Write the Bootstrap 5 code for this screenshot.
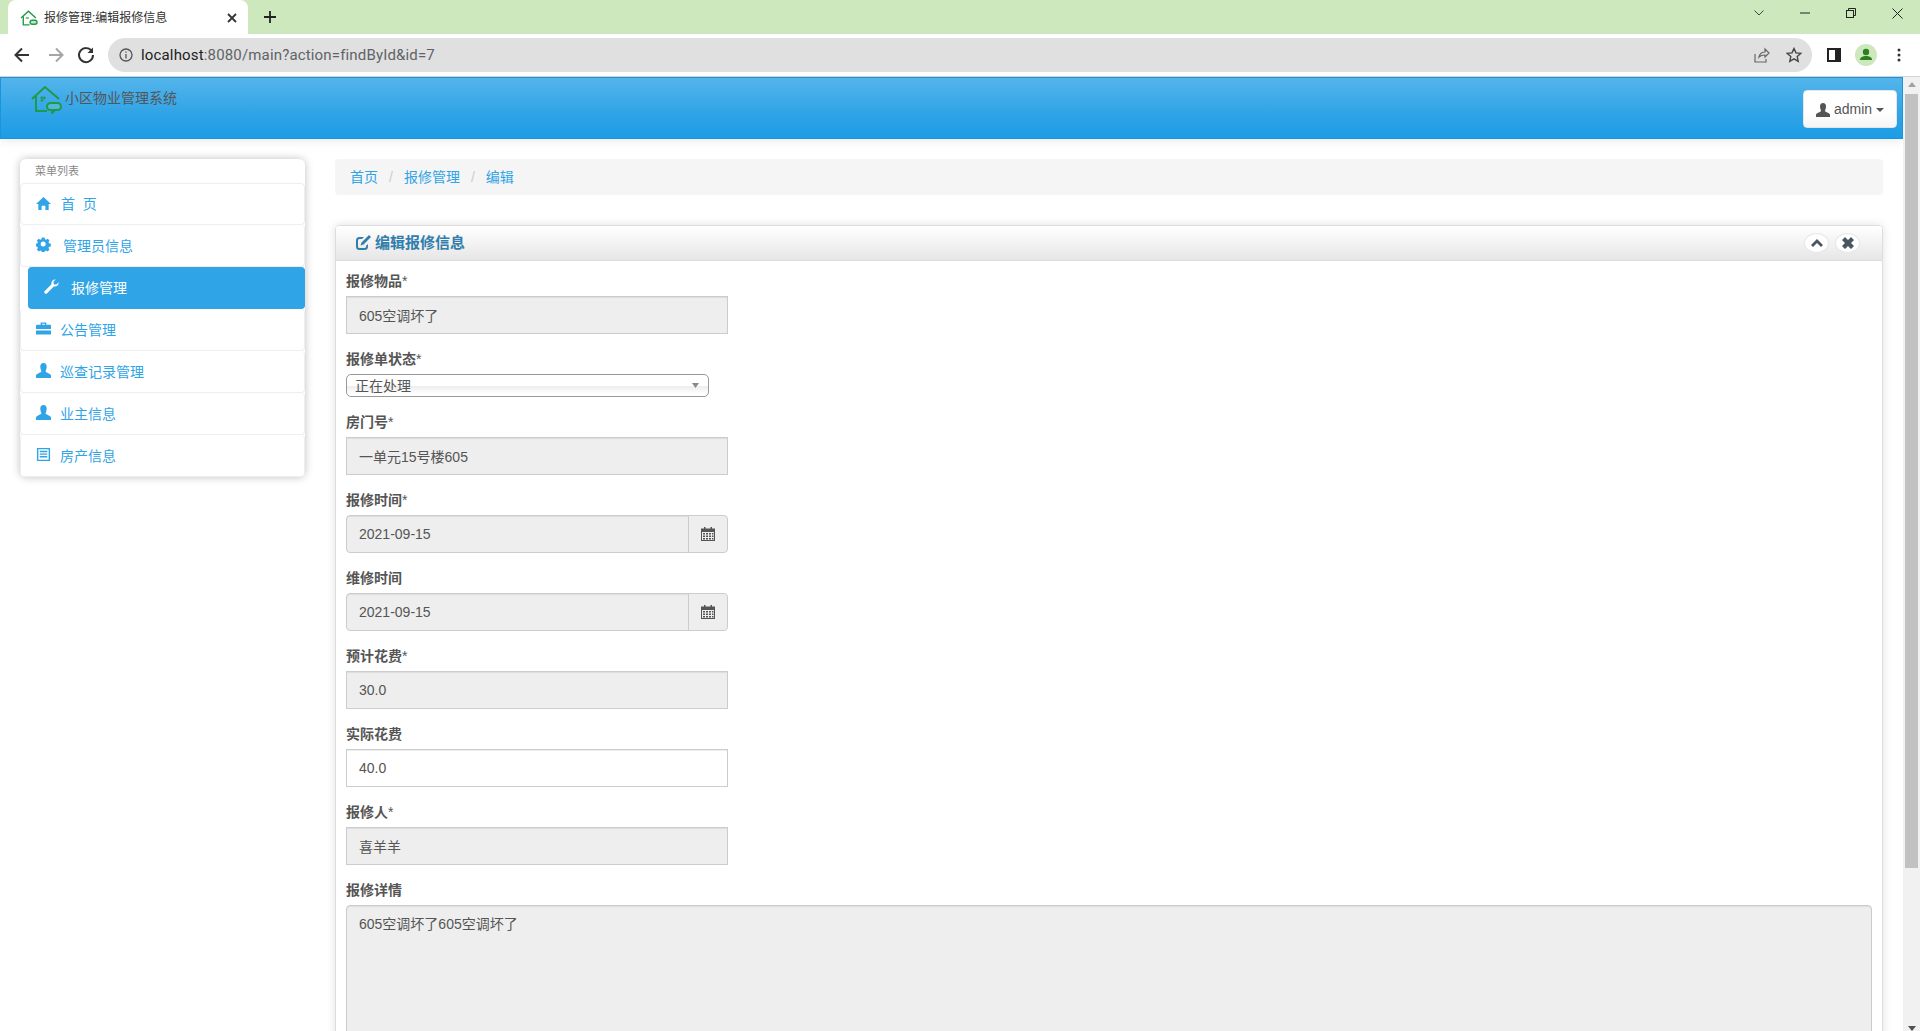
<!DOCTYPE html>
<html lang="zh">
<head>
<meta charset="utf-8">
<title>报修管理:编辑报修信息</title>
<link rel="stylesheet" href="https://cdn.jsdelivr.net/npm/bootstrap@5.3.0/dist/css/bootstrap.min.css">
<style>
html,body{height:100%;}
body{overflow:hidden;background:#fff;color:#555;font:14px/20px "Liberation Sans","Noto Sans CJK SC",sans-serif;display:flex;flex-direction:column;}
.tabstrip{height:34px;background:#cce8bc;flex:none;}
.chrome-tab{width:240px;height:34px;margin-left:8px;background:#fff;border-radius:8px 8px 0 0;padding:2px 11px 0 12px;font-size:12px;color:#333;}
.tab-title{margin-left:6px;flex:1;}
.win-ctl{width:46px;height:26px;margin-top:0;}
.toolbar{height:43px;flex:none;background:#fff;border-bottom:1px solid #d2d2d2;padding:0 19px 1px 12px;}
.tool-btn{width:20px;height:20px;flex:none;}
.tool-fwd{margin-left:6px;}
.tool-reload{margin-left:2px;}
.omnibox{height:34px;background:#e0e0e0;border-radius:17px;margin:0 1px 0 4px;padding:0 10px 0 11px;flex:1;font:15px/34px Roboto,"Liberation Sans",sans-serif;letter-spacing:.16px;color:#5f6368;}
.url-host{color:#202124;}
.page-area{flex:1;min-height:0;}
.page-main{flex:1;min-width:0;overflow:hidden;}
.scroll-track{width:17px;flex:none;background:#f1f1f1;position:relative;}
.scroll-thumb{position:absolute;left:2px;right:2px;top:17px;height:774px;background:#c1c1c1;}
.scroll-up{position:absolute;left:5px;top:5px;border:4px solid transparent;border-top:0;border-bottom:5px solid #a3a3a3;}
.scroll-down{position:absolute;left:5px;bottom:0;border:4px solid transparent;border-bottom:0;border-top:5px solid #505050;}
.app-nav{height:62px;padding:0;align-items:flex-start;background:linear-gradient(#54b4eb,#2fa4e7 60%,#1d9ce5);border:1px solid #1995dc;box-shadow:0 1px 10px rgba(0,0,0,.1);flex-wrap:nowrap;justify-content:space-between;}
.brand-box{margin:7px 0 0 30px;padding:0;color:#555;font-size:14px;line-height:20px;}
.brand-name{margin:3px 0 0 3px;}
.user-btn{margin:12px 5px 0 0;height:38px;width:94px;padding:0;font-size:14px;color:#555;background:linear-gradient(#fff,#fff 60%,#f5f5f5);border:1px solid #e6e6e6;border-radius:4px;}
.user-btn:hover{color:#555;background:#fff;}
.caret-mark{display:inline-block;margin-left:4px;border:4px solid transparent;border-top:4px solid #555;border-bottom:0;vertical-align:middle;}
.content-row{padding:20px 20px 0;gap:30px;}
.side-box{width:285px;flex:none;border-radius:6px;box-shadow:0 0 8px rgba(0,0,0,.25);height:318px;background:#fff;}
.side-head{height:24px;padding:2px 15px 0;font-size:11px;line-height:20px;color:#888;}
.side-list{--bs-list-group-border-color:#eee;}
.side-item{height:42px;margin:0;padding:0 0 0 15px;border:1px solid #eee;border-radius:4px!important;color:#2fa4e7;font-size:14px;background:#fff;}
.side-item svg{width:15px;height:15px;flex:none;fill:#2fa4e7;margin-right:9px;margin-top:-2px;}
.side-item.home-row svg{margin-right:10px;}
.side-item.wide-gap svg{margin-right:12px;}
.side-item.selected{margin-left:8px;background:#2fa4e7;border-color:#2fa4e7;color:#fff;padding-left:15px;}
.side-item.selected svg{fill:#fff;margin-right:12px;}
.main-col{flex:1;min-width:0;}
.crumbs{--bs-breadcrumb-divider:"/";--bs-breadcrumb-margin-bottom:30px;height:36px;background:#f5f5f5;border-radius:4px;padding:0 15px;align-items:center;font-size:14px;}
.crumbs .breadcrumb-item{padding-left:11px;}
.crumbs .breadcrumb-item:first-child{padding-left:0;}
.crumbs .breadcrumb-item::before{padding-right:11px;color:#ccc;}
.crumbs a{color:#2fa4e7;text-decoration:none;}
.edit-panel{border:1px solid #ddd;border-radius:4px 4px 0 0;box-shadow:0 0 10px rgba(0,0,0,.12);}
.panel-top{height:35px;padding:0 22px 0 19px;background:linear-gradient(#fff,#f5f5f5 40%,#e6e6e6);border-bottom:1px solid #ddd;border-radius:3px 3px 0 0;font-size:15px;font-weight:bold;color:#317eac;}
.panel-top svg.title-ico{width:16px;height:16px;fill:#317eac;margin-right:4px;}
.round-tool{width:25px;height:20px;margin-left:6px;padding:0;display:flex;align-items:center;justify-content:center;background:#fff;border:1px solid #e6e6e6;border-radius:50%;}
.round-tool svg{width:12px;height:12px;fill:#4a5661;}
.panel-form{padding:10px 10px 0;}
.field-wrap{margin-bottom:15px;}
.field-short{width:382px;}
.field-label{display:block;margin:0 0 5px;font-weight:bold;color:#555;line-height:20px;height:20px;font-size:14px;}
.star-mark{font-weight:normal;}
.plain-input{height:38px;padding:8px 12px;font-size:14px;line-height:20px;color:#555;border:1px solid #ccc;border-radius:0;box-shadow:inset 0 1px 1px rgba(0,0,0,.075);}
.plain-input:disabled,.plain-input[readonly]{background:#eee;opacity:1;color:#555;}
.date-group .plain-input{border-radius:4px 0 0 4px;}
.date-addon{width:40px;height:38px;justify-content:center;padding:0;background:#eee;border:1px solid #ccc;border-radius:0 4px 4px 0;}
.date-addon svg{width:14px;height:14px;fill:#555;}
.state-select{width:363px;height:23px;padding:0 0 0 8px;font-size:14px;line-height:20px;color:#555;border:1px solid #999;border-radius:5px;box-shadow:none;background:url("data:image/svg+xml,%3Csvg xmlns='http://www.w3.org/2000/svg' width='7' height='5'%3E%3Cpath d='M0 0h7L3.500 5z' fill='%23888'/%3E%3C/svg%3E") no-repeat right 9px center,linear-gradient(#fff 50%,#ececec 52%,#fff 90%);}
.detail-area{height:210px;width:100%;padding:8px 12px;font-size:14px;line-height:20px;color:#555;background:#eee;border:1px solid #ccc;border-radius:4px;box-shadow:inset 0 1px 1px rgba(0,0,0,.075);resize:none;}
.panel-ico{margin-left:6px;}
.avatar-ico{margin-left:6px;}
.menu-ico{margin-left:12px;}
</style>
</head>
<body>
<div class="tabstrip d-flex">
  <div class="chrome-tab d-flex align-items-center">
    <svg width="18" height="16" viewBox="0 0 30 28" fill="none" stroke="#1f9a46" stroke-width="2.4"><path d="M1 14 14 2l13 12"/><path d="M5 11v15h11"/><rect x="17" y="18" width="12" height="7" rx="3.5" fill="#bfe6c8"/><path d="M10 13h2v2h-2zM13 13h1v2h-1z" stroke-width="1"/></svg>
    <span class="tab-title">报修管理:编辑报修信息</span>
    <svg width="10" height="10" viewBox="0 0 10 10" stroke="#333" stroke-width="1.8"><path d="M1 1l8 8M9 1l-8 8"/></svg>
  </div>
  <div class="ms-3 d-flex align-items-center">
    <svg width="12" height="12" viewBox="0 0 12 12" stroke="#222" stroke-width="1.8"><path d="M6 0v12M0 6h12"/></svg>
  </div>
  <div class="ms-auto d-flex">
    <div class="win-ctl d-flex align-items-center justify-content-center"><svg width="10" height="6" viewBox="0 0 10 6" fill="none" stroke="#444"><path d="M.5.5 5 5 9.500.5"/></svg></div>
    <div class="win-ctl d-flex align-items-center justify-content-center"><svg width="10" height="2" viewBox="0 0 10 2" stroke="#222"><path d="M0 1h10"/></svg></div>
    <div class="win-ctl d-flex align-items-center justify-content-center"><svg width="10" height="10" viewBox="0 0 10 10" fill="none" stroke="#222"><rect x=".5" y="2.500" width="7" height="7"/><path d="M2.500 2.500V.5h7v7h-2"/></svg></div>
    <div class="win-ctl d-flex align-items-center justify-content-center"><svg width="11" height="11" viewBox="0 0 11 11" stroke="#222"><path d="M.5.5l10 10M10.500.5l-10 10"/></svg></div>
  </div>
</div>
<div class="toolbar d-flex align-items-center gap-2">
  <svg class="tool-btn" viewBox="0 0 20 20" fill="none" stroke="#333" stroke-width="2"><path d="M17 10H4M10 3.500 3.500 10 10 16.500"/></svg>
  <svg class="tool-btn tool-fwd" viewBox="0 0 20 20" fill="none" stroke="#a5a5a5" stroke-width="2"><path d="M3 10h13M10 3.500l6.500 6.500-6.500 6.500"/></svg>
  <svg class="tool-btn tool-reload" viewBox="0 0 20 20" fill="none" stroke="#333" stroke-width="2"><path d="M16 6.500A7 7 0 1 0 17 10"/><path d="M17 2.500V8h-5.500z" fill="#333" stroke="none"/></svg>
  <div class="omnibox d-flex align-items-center">
    <svg width="14" height="14" viewBox="0 0 14 14" fill="none" stroke="#555" stroke-width="1.300"><circle cx="7" cy="7" r="6"/><path d="M7 6v4.500M7 3.500v1.300"/></svg>
    <span class="ms-2"><span class="url-host">localhost</span>:8080/main?action=findById&amp;id=7</span>
    <svg class="ms-auto" width="16" height="16" viewBox="0 0 16 16" fill="none" stroke="#666" stroke-width="1.200"><path d="M1 7v8h11v-3M5 10c1-4 4-5 6-5V2l4 4-4 4V8c-2 0-4 0-6 2z"/></svg>
    <svg class="ms-3" width="16" height="16" viewBox="0 0 16 16" fill="none" stroke="#444" stroke-width="1.400"><path d="m8 1.500 2 4.400 4.800.5-3.600 3.200 1 4.700L8 11.900l-4.200 2.400 1-4.700L1.200 6.400 6 5.900z"/></svg>
  </div>
  <svg width="14" height="14" viewBox="0 0 14 14" class="panel-ico"><path fill="#222" d="M0 0h14v14H0z"/><path fill="#fff" d="M2 2h6v10H2z"/></svg>
  <svg width="22" height="22" viewBox="0 0 22 22" class="avatar-ico"><circle cx="11" cy="11" r="11" fill="#cce8bc"/><circle cx="11" cy="8" r="3.200" fill="#2f7d1f"/><path fill="#2f7d1f" d="M5 16c0-3 3-4 6-4s6 1 6 4z"/></svg>
  <svg width="4" height="14" viewBox="0 0 4 14" class="menu-ico" fill="#333"><circle cx="2" cy="2" r="1.500"/><circle cx="2" cy="7" r="1.500"/><circle cx="2" cy="12" r="1.500"/></svg>
</div>
<div class="page-area d-flex">
  <div class="page-main">
    <nav class="navbar app-nav">
      <div class="brand-box d-flex align-items-start">
        <svg width="31" height="29" viewBox="0 0 31 29" fill="none" stroke="#1f9a46" stroke-width="2"><path d="M1 14 14 2l14 12"/><path d="M5 11v15h11"/><rect x="16" y="18" width="14" height="7" rx="3.500" fill="#55b7d8"/><path d="M10 12h2v2h-2zM13 12h1v2h-1zM10 15h2v1h-2z" stroke-width="1"/><path d="M21 25v3l3-3"/></svg>
        <span class="brand-name">小区物业管理系统</span>
      </div>
      <button class="btn user-btn" type="button">
        <svg width="14" height="14" viewBox="0 0 14 14" fill="#555" class="me-1"><path d="M7 0c2 0 3 1.500 3 3.500S9 7 9 8c0 1 4 1.500 5 3.500V14H0v-2.500C1 9.500 5 9 5 8S4 5.500 4 3.500 5 0 7 0z"/></svg>admin<span class="caret-mark"></span>
      </button>
    </nav>
    <div class="content-row d-flex align-items-start">
      <aside class="side-box">
        <div class="side-head">菜单列表</div>
        <div class="list-group side-list">
          <a href="#" class="list-group-item side-item home-row d-flex align-items-center"><svg viewBox="0 0 16 16"><path d="M8 1 0 8.500h2.500V15H6v-4.500h4V15h3.500V8.500H16z"/></svg>首&nbsp;&nbsp;页</a>
          <a href="#" class="list-group-item side-item wide-gap d-flex align-items-center"><svg viewBox="0 0 16 16"><path fill-rule="evenodd" d="M6.500 1h3l.4 2 1.300.6 1.800-1.100 2 2-1.100 1.800.6 1.300 2 .4v3l-2 .4-.6 1.300 1.100 1.800-2 2-1.800-1.100-1.300.6-.4 1.500h-3l-.4-1.500-1.300-.6-1.800 1.100-2-2 1.100-1.800-.6-1.300-2-.4v-3l2-.4.600-1.300-1.100-1.800 2-2 1.800 1.100 1.300-.6zM8 5.500a2.800 2.800 0 1 0 0 5.600 2.800 2.800 0 0 0 0-5.600z" transform="translate(0 -.5) scale(.96)"/></svg>管理员信息</a>
          <a href="#" class="list-group-item side-item selected d-flex align-items-center"><svg viewBox="0 0 16 16"><path d="M15.500 3.500 13 6l-2.500-.5L10 3l2.500-2.500C10 0 7.500 2 8 5.500L.8 12.700a1.700 1.700 0 0 0 2.500 2.500L10.500 8c3.500.500 5.500-2 5-4.500z"/></svg>报修管理</a>
          <a href="#" class="list-group-item side-item d-flex align-items-center"><svg viewBox="0 0 16 16"><path d="M5 1.500h6V4h4a1 1 0 0 1 1 1v3.500H0V5a1 1 0 0 1 1-1h4zM6.500 3v1h3V3zM0 10h16v3.500a1 1 0 0 1-1 1H1a1 1 0 0 1-1-1z"/></svg>公告管理</a>
          <a href="#" class="list-group-item side-item d-flex align-items-center"><svg viewBox="0 0 14 14"><path d="M7 0c2 0 3 1.500 3 3.500S9 7 9 8c0 1 4 1.500 5 3.500V14H0v-2.500C1 9.500 5 9 5 8S4 5.500 4 3.500 5 0 7 0z"/></svg>巡查记录管理</a>
          <a href="#" class="list-group-item side-item d-flex align-items-center"><svg viewBox="0 0 14 14"><path d="M7 0c2 0 3 1.500 3 3.500S9 7 9 8c0 1 4 1.500 5 3.500V14H0v-2.500C1 9.500 5 9 5 8S4 5.500 4 3.500 5 0 7 0z"/></svg>业主信息</a>
          <a href="#" class="list-group-item side-item d-flex align-items-center"><svg viewBox="0 0 16 16"><path fill-rule="evenodd" d="M1 1h14v14H1zM2.500 2.500v11h11v-11zM4 4h8v1.500H4zM4 6.800h8v1.500H4zM4 9.600h8v1.500H4z"/></svg>房产信息</a>
        </div>
      </aside>
      <main class="main-col">
        <nav aria-label="breadcrumb">
          <ol class="breadcrumb crumbs">
            <li class="breadcrumb-item"><a href="#">首页</a></li>
            <li class="breadcrumb-item"><a href="#">报修管理</a></li>
            <li class="breadcrumb-item"><a href="#">编辑</a></li>
          </ol>
        </nav>
        <section class="edit-panel">
          <div class="panel-top d-flex align-items-center">
            <svg class="title-ico" viewBox="0 0 16 16"><path d="M13 9v2.500A3.500 3.500 0 0 1 9.500 15h-5A3.500 3.500 0 0 1 1 11.500v-6A3.500 3.500 0 0 1 4.500 2H9L7 4H4.500A1.500 1.500 0 0 0 3 5.500v6A1.500 1.500 0 0 0 4.500 13h5a1.500 1.500 0 0 0 1.500-1.500V11zM14 0l2 2-7.500 7.500L5.500 10.500 6.500 7.500z"/></svg>
            <span>编辑报修信息</span>
            <button class="round-tool ms-auto" type="button" aria-label="collapse"><svg viewBox="0 0 12 12"><path d="M6 2 12 8l-2 2-4-4-4 4-2-2z"/></svg></button>
            <button class="round-tool" type="button" aria-label="close"><svg viewBox="0 0 12 12"><path d="M3 0l3 3 3-3 3 3-3 3 3 3-3 3-3-3-3 3-3-3 3-3-3-3z"/></svg></button>
          </div>
          <form class="panel-form">
            <div class="field-wrap field-short"><label class="field-label">报修物品<span class="star-mark">*</span></label><input class="form-control plain-input" value="605空调坏了" readonly></div>
            <div class="field-wrap field-short"><label class="field-label">报修单状态<span class="star-mark">*</span></label><select class="form-select state-select"><option>正在处理</option></select></div>
            <div class="field-wrap field-short"><label class="field-label">房门号<span class="star-mark">*</span></label><input class="form-control plain-input" value="一单元15号楼605" readonly></div>
            <div class="field-wrap field-short"><label class="field-label">报修时间<span class="star-mark">*</span></label>
              <div class="input-group date-group"><input class="form-control plain-input" value="2021-09-15" readonly><span class="input-group-text date-addon"><svg viewBox="0 0 14 14"><path fill-rule="evenodd" d="M3 0h1.500v1.500h5V0H11v1.500h3V14H0V1.500h3zM1 5v8h12V5zM2 6h2v1.500H2zM5 6h2v1.500H5zM8 6h2v1.500H8zM11 6h1.500v1.500H11zM2 8.500h2V10H2zM5 8.500h2V10H5zM8 8.500h2V10H8zM11 8.500h1.500V10H11zM2 11h2v1.500H2zM5 11h2v1.500H5zM8 11h2v1.500H8zM11 11h1.500v1.500H11z"/></svg></span></div></div>
            <div class="field-wrap field-short"><label class="field-label">维修时间</label>
              <div class="input-group date-group"><input class="form-control plain-input" value="2021-09-15" readonly><span class="input-group-text date-addon"><svg viewBox="0 0 14 14"><path fill-rule="evenodd" d="M3 0h1.500v1.500h5V0H11v1.500h3V14H0V1.500h3zM1 5v8h12V5zM2 6h2v1.500H2zM5 6h2v1.500H5zM8 6h2v1.500H8zM11 6h1.500v1.500H11zM2 8.500h2V10H2zM5 8.500h2V10H5zM8 8.500h2V10H8zM11 8.500h1.500V10H11zM2 11h2v1.500H2zM5 11h2v1.500H5zM8 11h2v1.500H8zM11 11h1.500v1.500H11z"/></svg></span></div></div>
            <div class="field-wrap field-short"><label class="field-label">预计花费<span class="star-mark">*</span></label><input class="form-control plain-input" value="30.0" readonly></div>
            <div class="field-wrap field-short"><label class="field-label">实际花费</label><input class="form-control plain-input" value="40.0"></div>
            <div class="field-wrap field-short"><label class="field-label">报修人<span class="star-mark">*</span></label><input class="form-control plain-input" value="喜羊羊" readonly></div>
            <div class="field-wrap"><label class="field-label">报修详情</label><textarea class="detail-area d-block" readonly>605空调坏了605空调坏了</textarea></div>
          </form>
        </section>
      </main>
    </div>
  </div>
  <div class="scroll-track"><span class="scroll-up"></span><div class="scroll-thumb"></div><span class="scroll-down"></span></div>
</div>
<script src="https://cdn.jsdelivr.net/npm/bootstrap@5.3.0/dist/js/bootstrap.bundle.min.js"></script>
</body>
</html>
